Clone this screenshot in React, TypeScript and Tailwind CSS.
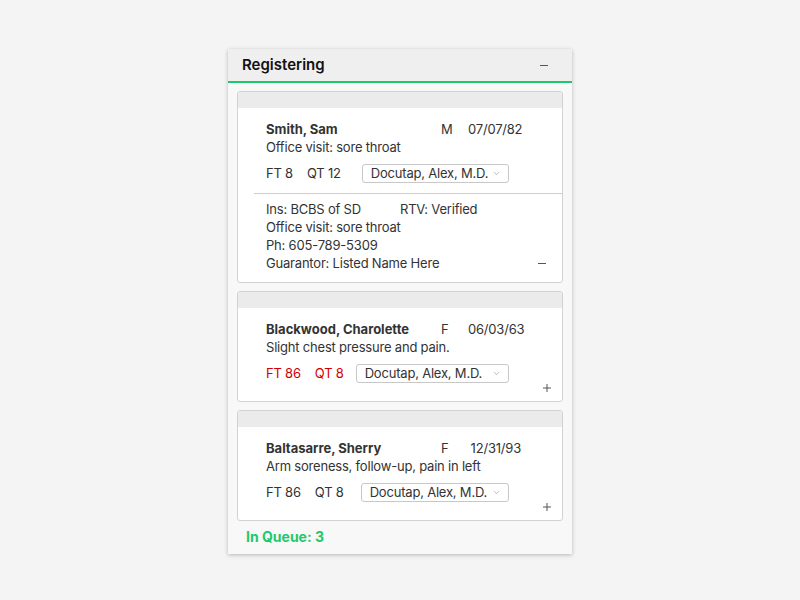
import { ChevronDown } from "lucide-react";

type Patient = {
  name: string;
  sex: string;
  dob: string;
  reason: string;
  ft: string;
  qt: string;
  late?: boolean;
  gap: string;
  expanded?: boolean;
};

const patients: Patient[] = [
  { name: "Smith, Sam", sex: "M", dob: "07/07/82", reason: "Office visit: sore throat", ft: "FT 8", qt: "QT 12", gap: "ml-[21px]", expanded: true },
  { name: "Blackwood, Charolette", sex: "F", dob: "06/03/63", reason: "Slight chest pressure and pain.", ft: "FT 86", qt: "QT 8", late: true, gap: "ml-[12px]" },
  { name: "Baltasarre, Sherry", sex: "F", dob: "12/31/93", reason: "Arm soreness, follow-up, pain in left", ft: "FT 86", qt: "QT 8", gap: "ml-[17px]" },
];

function ProviderSelect({ className }: { className: string }) {
  return (
    <div className={`mr-[12px] flex h-[19px] flex-1 items-center justify-between rounded-[3px] border border-[#c8c8c8] bg-white pl-2 pr-[7px] ${className}`}>
      <span>Docutap, Alex, M.D.</span>
      <ChevronDown className="h-[9px] w-[9px] text-[#888]" strokeWidth={1.5} />
    </div>
  );
}

function PatientCard({ p }: { p: Patient }) {
  return (
    <div className="overflow-hidden rounded-[3px] border border-[#d2d2d2] bg-white">
      <div className="h-4 bg-[#ebebeb]" />
      <div className="pl-[28px] pr-[41px] pt-[13px]">
        <div className="flex h-[18px] items-center">
          <span className="flex-1 font-bold tracking-normal">{p.name}</span>
          <span className="w-[27px]">{p.sex}</span>
          <span className="w-[53px] text-right">{p.dob}</span>
        </div>
        <div className="flex h-[17px] items-center">{p.reason}</div>
        <div className="mt-[8px] flex h-[19px] items-center">
          <span className={p.late ? "text-[#d40000]" : ""}>{p.ft}</span>
          <span className={`ml-[14px] ${p.late ? "text-[#d40000]" : ""}`}>{p.qt}</span>
          <ProviderSelect className={p.gap} />
        </div>
      </div>
      {p.expanded ? (
        <div className="mt-[10px]">
          <div className="ml-[16px] border-t border-[#cfcfcf]" />
          <div className="pl-[28px] pr-[16px] pt-[6px] pb-[10px] leading-[18px]">
            <div className="flex">
              <span className="w-[134px]">Ins: BCBS of SD</span>
              <span>RTV: Verified</span>
            </div>
            <div>Office visit: sore throat</div>
            <div>Ph: 605-789-5309</div>
            <div className="flex items-center justify-between">
              <span>Guarantor: Listed Name Here</span>
              <span className="h-px w-[8px] bg-[#555]" />
            </div>
          </div>
        </div>
      ) : (
        <div className="flex h-[18px] items-start justify-end pr-[11px] pt-[1px]">
          <svg width="8" height="8" viewBox="0 0 8 8" className="text-[#555]">
            <path d="M4 0v8M0 4h8" stroke="currentColor" strokeWidth="1" />
          </svg>
        </div>
      )}
    </div>
  );
}

export default function App() {
  return (
    <div className="flex min-h-screen justify-center bg-[#f4f4f4] pt-[49px] text-[13px] tracking-[-0.2px] text-[#333]" style={{ fontFamily: "Inter, 'Liberation Sans', sans-serif" }}>
      <div className="h-[505px] w-[344px] bg-[#f8f8f8] shadow-[0_1px_4px_rgba(0,0,0,0.25)]">
        <div className="flex h-[34px] items-center justify-between border-b-2 border-[#1ec86a] bg-[#efefef] pl-[14px] pr-[24px] pt-[1px]">
          <span className="text-[15px] font-semibold tracking-normal text-[#111]">Registering</span>
          <span className="h-px w-[8px] bg-[#555]" />
        </div>
        <div className="flex flex-col gap-2 px-[9px] pt-2">
          {patients.map((p) => (
            <PatientCard key={p.name} p={p} />
          ))}
        </div>
        <div className="pl-[18px] pt-[7px] text-[14px] font-bold leading-[18px] tracking-normal text-[#1ec86a]">In Queue: 3</div>
      </div>
    </div>
  );
}
